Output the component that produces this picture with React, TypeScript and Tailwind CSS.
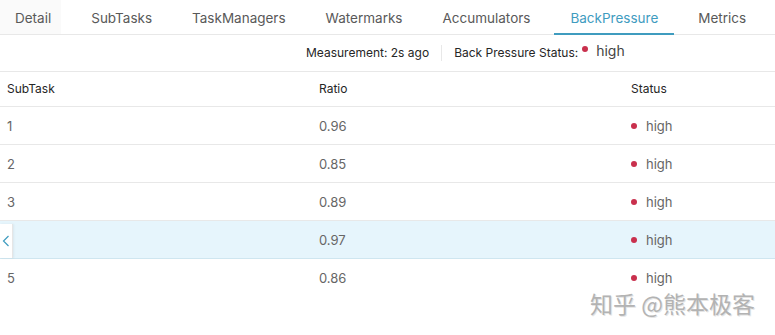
import React from 'react';

const tabs = ['Detail', 'SubTasks', 'TaskManagers', 'Watermarks', 'Accumulators', 'BackPressure', 'Metrics'];

const rows = [
  { id: '1', ratio: '0.96' },
  { id: '2', ratio: '0.85' },
  { id: '3', ratio: '0.89' },
  { id: '4', ratio: '0.97', active: true },
  { id: '5', ratio: '0.86' },
];

function Dot() {
  return <span className="inline-block w-[6px] h-[6px] rounded-full bg-[#c9304d]" />;
}

export default function App() {
  return (
    <div
      className="relative w-[775px] h-[335px] overflow-hidden bg-white"
      style={{ fontFamily: 'Inter, "Noto Sans", sans-serif' }}
    >
      {/* tabs */}
      <div className="flex h-[35px] border-b border-[#e8e8e8]">
        {tabs.map((t, i) => {
          const active = t === 'BackPressure';
          return (
            <div
              key={t}
              className={
                'relative flex items-center h-full pt-[2px] text-[13.5px] ' +
                (i === 0 ? 'pl-[15px] pr-[10px] mr-[14px] bg-[#fafafa] ' : 'px-4 mr-2 ') +
                (active ? 'text-[#3f9cbf]' : 'text-[#595959]')
              }
            >
              {t}
              {active && <div className="absolute left-0 right-0 bottom-[-1px] h-[2px] bg-[#3f9cbf]" />}
            </div>
          );
        })}
      </div>

      {/* measurement bar */}
      <div className="flex items-center h-[37px] border-b border-[#e8e8e8] text-[12px] text-[#262626] pl-[306px]">
        <span>Measurement: 2s ago</span>
        <span className="mx-[12px] w-px h-[16px] bg-[#e8e8e8]" />
        <span>Back Pressure Status:</span>
        <span className="ml-[4px] mb-[8px] flex"><Dot /></span>
        <span className="ml-[8px] mb-[6px] text-[14px] text-[#444]">high</span>
      </div>

      {/* table */}
      <div className="w-[936px]">
        <div className="grid grid-cols-3 h-[35px] items-center border-b border-[#e8e8e8] text-[12px] text-[#262626]">
          <div className="pl-[7px]">SubTask</div>
          <div className="pl-[7px]">Ratio</div>
          <div className="pl-[7px]">Status</div>
        </div>
        {rows.map((r, i) => (
          <div
            key={r.id}
            className={
              'grid grid-cols-3 h-[38px] items-center text-[13px] leading-[14px] text-[#666] ' +
              (i < rows.length - 1 ? 'border-b ' : '') +
              (r.active ? 'bg-[#e6f5fc] border-[#cfe6f0]' : 'border-[#e8e8e8]')
            }
          >
            <div className={'pl-[7px] ' + (r.active ? 'invisible' : '')}>{r.id}</div>
            <div className="pl-[7px]">{r.ratio}</div>
            <div className="pl-[7px] flex items-center">
              <Dot />
              <span className="ml-[9px]">high</span>
            </div>
          </div>
        ))}
      </div>

      {/* collapse handle */}
      <div className="absolute left-0 top-[224px] w-[13px] h-[34px] bg-white border-r border-[#e6e6e6] flex items-center justify-center shadow-[1px_0_2px_rgba(0,0,0,0.06)]">
        <svg width="8" height="12" viewBox="0 0 8 12" fill="none">
          <path d="M6.5 1 L1.5 6 L6.5 11" stroke="#3f9cbf" strokeWidth="1.2" />
        </svg>
      </div>

      {/* watermark */}
      <div
        className="absolute left-[590px] top-[292px] text-[23px] leading-none text-[#b3b3b3] whitespace-nowrap"
        style={{ fontFamily: '"Noto Sans CJK SC", sans-serif', textShadow: '1px 1px 0 #e5e5e5' }}
      >
        知乎 @熊本极客
      </div>
    </div>
  );
}
